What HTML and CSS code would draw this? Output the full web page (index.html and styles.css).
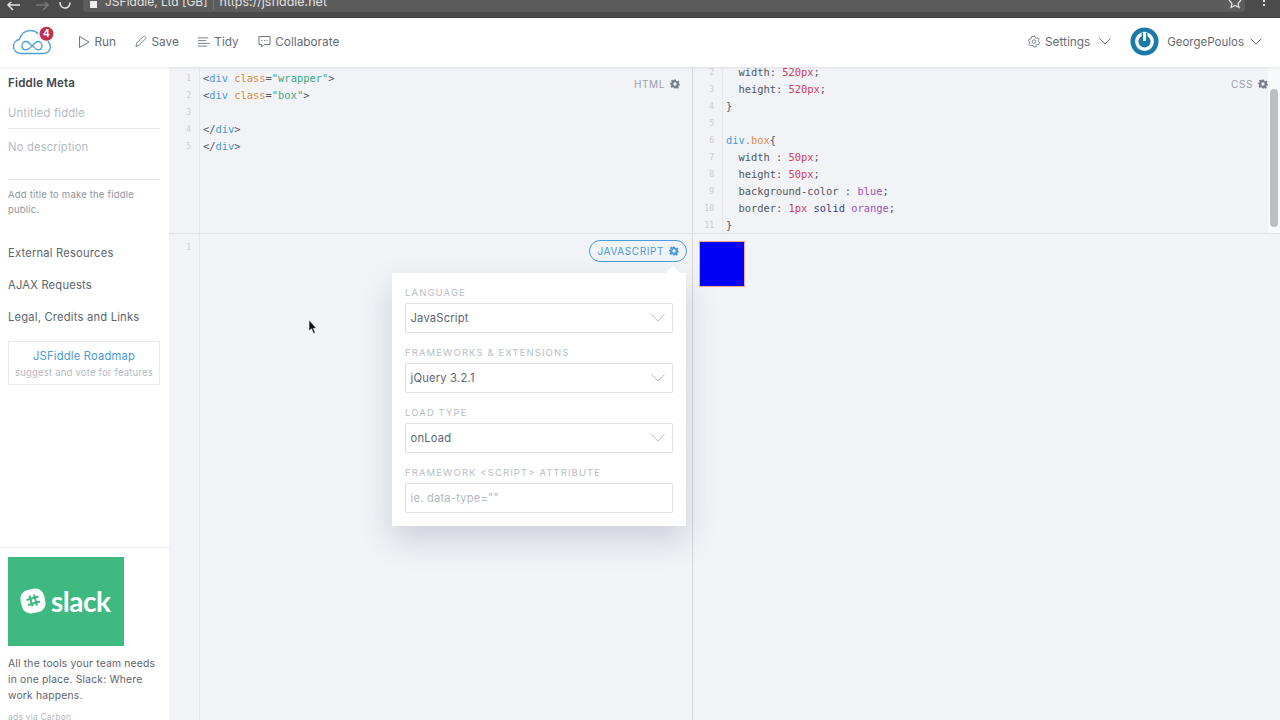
FILE: index.html
```html
<!DOCTYPE html>
<html lang="en">
<head>
<meta charset="UTF-8" />
<title>JSFiddle</title>
<link rel="stylesheet" href="styles.css">
</head>
<body>

<div class="browser-bar">
  <div class="browser-nav">
    <svg width="72" height="14" viewBox="0 0 72 14" fill="none" stroke="#e4e4e4" stroke-width="1.5">
      <path d="M20 3H9M13 -2L8 3L13 8"/>
      <path d="M36 3H47M43 -2L48 3L43 8" stroke="#7a7a7a"/>
      <path d="M70 0.5A5 5 0 1 1 68 -3"/>
    </svg>
  </div>
  <div class="address">
    <span class="lock"></span>
    <span class="site">JSFiddle, Ltd [GB]</span>
    <span class="url">https://jsfiddle.net</span>
  </div>
  <div class="browser-end">
    <svg width="14" height="12" viewBox="0 0 14 12" fill="none" stroke="#e4e4e4" stroke-width="1.2"><path d="M1 0L4 3.500L3 7.500L7 5.500L11 7.500L10 3.500L13 0"/></svg>
    <span class="dots"></span>
  </div>
</div>

<header class="topbar">
  <svg class="logo" width="50" height="34" viewBox="0 0 50 34" fill="none" stroke="#4c9ed9" stroke-width="1.300">
    <path d="M9 28.500C4 28.500 1.500 25 1.500 21.500C1.500 18 4 15 7.500 14.500C8.500 9 13 5.500 18.500 5.500C22 5.500 24.500 7 26 9"/>
    <path d="M36 16C37.500 18 38.500 20 38.500 22C38.500 26 35 28.500 31 28.500H9"/>
    <path d="M19.500 20.500C17.500 18 15.800 16.500 14 16.500C11.500 16.500 10 18.500 10 20.500C10 22.800 11.500 24.800 14 24.800C17 24.800 19 22 20.500 20.500C22 19 24 16.500 26 16.500C28.500 16.500 30 18.500 30 20.500C30 22.800 28.500 24.800 26 24.800C24 24.800 22.500 22.800 21 21.200"/>
    <circle cx="34.500" cy="8.800" r="7" fill="#c0314f" stroke="none"/>
    <text x="34.500" y="12.300" class="logo-count" stroke="none">4</text>
  </svg>
  <nav class="actions">
    <a class="action">
      <svg width="11" height="14" viewBox="0 0 11 14" fill="none" stroke="#6d7680" stroke-width="1"><path d="M.5 1.500L10 7L.5 12.500Z"/></svg>
      Run
    </a>
    <a class="action">
      <svg width="12" height="13" viewBox="0 0 13 13" fill="none" stroke="#6d7680" stroke-width="1"><path d="M1 12L2 8L8.500 1.500C9.200 .8 10.200 .8 11 1.500C11.800 2.300 11.800 3.300 11 4L4.500 10.500Z"/></svg>
      Save
    </a>
    <a class="action">
      <svg width="12" height="12" viewBox="0 0 13 12" fill="none" stroke="#6d7680" stroke-width="1"><path d="M0 1.500H11M0 4.500H9M0 7.500H12.500M0 10.500H10"/></svg>
      Tidy
    </a>
    <a class="action">
      <svg width="13" height="13" viewBox="0 0 13 13" fill="none" stroke="#6d7680" stroke-width="1"><path d="M1 1.500H12V9.500H6L3.500 12V9.500H1Z"/><path d="M3.500 5.500H4.500M6 5.500H7M8.500 5.500H9.500"/></svg>
      Collaborate
    </a>
  </nav>
  <div class="account">
    <a class="action settings">
      <svg width="12" height="13" viewBox="0 0 24 24" fill="none" stroke="#6d7680" stroke-width="1.800"><circle cx="12" cy="12" r="3.500"/><path d="M10 1.500H14L14.700 4.800L17.200 5.900L20 4L22.500 7.500L20.200 9.800L20.800 12.500L23 14L21.500 18L18.500 17.500L16.500 19.500L16.500 22.500L12 23L10.500 20.300L7.500 19.500L5 21L2 18L3.800 15.300L3 12.500L.8 11L2 7L5 7L6.800 5L7 2.500Z"/></svg>
      Settings
      <svg class="chevron" width="12" height="7" viewBox="0 0 12 7" fill="none" stroke="#6d7680"><path d="M.5 .5L6 6L11.500 .5"/></svg>
    </a>
    <a class="user">
      <svg width="29" height="29" viewBox="0 0 30 30" fill="none">
        <circle cx="15" cy="15" r="14.500" fill="#1a7ba8"/>
        <circle cx="15" cy="15" r="8" stroke="#fff" stroke-width="3.500"/>
        <path d="M15 6V15" stroke="#1a7ba8" stroke-width="6"/>
        <path d="M15 5V14.500" stroke="#fff" stroke-width="3"/>
      </svg>
      GeorgePoulos
      <svg class="chevron" width="12" height="7" viewBox="0 0 12 7" fill="none" stroke="#6d7680"><path d="M.5 .5L6 6L11.500 .5"/></svg>
    </a>
  </div>
</header>

<div class="main">
  <aside class="sidebar">
    <div class="meta">
      <h4>Fiddle Meta</h4>
      <div class="field title-field">Untitled fiddle</div>
      <div class="field desc-field">No description</div>
      <p class="hint">Add title to make the fiddle public.</p>
    </div>
    <ul class="side-links">
      <li>External Resources</li>
      <li>AJAX Requests</li>
      <li>Legal, Credits and Links</li>
    </ul>
    <div class="roadmap">
      <a>JSFiddle Roadmap</a>
      <span>suggest and vote for features</span>
    </div>
    <div class="ad">
      <div class="ad-image">
        <svg width="26" height="26" viewBox="0 0 26 26">
          <rect x="1" y="1" width="24" height="24" rx="9" fill="#fff" transform="rotate(-12 13 13)"/>
          <path d="M9.500 7.500L12.500 18.500M14 6.500L17 17.500M6.500 12L18.500 8.500M8 17L20 13.500" stroke="#3eb97f" stroke-width="2" fill="none"/>
        </svg>
        <span>slack</span>
      </div>
      <p>All the tools your team needs in one place. Slack: Where work happens.</p>
      <small>ads via Carbon</small>
    </div>
  </aside>

  <section class="workspace">
    <div class="col col-left">
      <div class="pane pane-html">
        <div class="code">
          <div class="line"><i>1</i><code><b class="p">&lt;</b><b class="tag">div</b> <b class="attr">class</b><b class="p">=</b><b class="str">"wrapper"</b><b class="p">&gt;</b></code></div>
          <div class="line"><i>2</i><code><b class="p">&lt;</b><b class="tag">div</b> <b class="attr">class</b><b class="p">=</b><b class="str">"box"</b><b class="p">&gt;</b></code></div>
          <div class="line"><i>3</i><code></code></div>
          <div class="line"><i>4</i><code><b class="p">&lt;/</b><b class="tag">div</b><b class="p">&gt;</b></code></div>
          <div class="line"><i>5</i><code><b class="p">&lt;/</b><b class="tag">div</b><b class="p">&gt;</b></code></div>
        </div>
        <div class="pane-label">HTML <svg class="gear"><use href="#gear"/></svg></div>
      </div>
      <div class="pane pane-js">
        <div class="code">
          <div class="line"><i>1</i><code></code></div>
        </div>
        <div class="pane-label active">JAVASCRIPT <svg class="gear"><use href="#gear"/></svg></div>
        <div class="popover">
          <label>LANGUAGE</label>
          <div class="select">JavaScript <svg class="chevron" width="14" height="8" viewBox="0 0 14 8" fill="none" stroke="#b9bec4"><path d="M.5 .5L7 7L13.500 .5"/></svg></div>
          <label>FRAMEWORKS &amp; EXTENSIONS</label>
          <div class="select">jQuery 3.2.1 <svg class="chevron" width="14" height="8" viewBox="0 0 14 8" fill="none" stroke="#b9bec4"><path d="M.5 .5L7 7L13.500 .5"/></svg></div>
          <label>LOAD TYPE</label>
          <div class="select">onLoad <svg class="chevron" width="14" height="8" viewBox="0 0 14 8" fill="none" stroke="#b9bec4"><path d="M.5 .5L7 7L13.500 .5"/></svg></div>
          <label>FRAMEWORK &lt;SCRIPT&gt; ATTRIBUTE</label>
          <div class="select placeholder">ie. data-type=""</div>
        </div>
      </div>
    </div>
    <div class="col col-right">
      <div class="pane pane-css">
        <div class="code scrolled">
          <div class="line"><i>2</i><code>  width: <b class="num">520px</b>;</code></div>
          <div class="line"><i>3</i><code>  height: <b class="num">520px</b>;</code></div>
          <div class="line"><i>4</i><code>}</code></div>
          <div class="line"><i>5</i><code></code></div>
          <div class="line"><i>6</i><code><b class="tag">div</b><b class="attr">.box</b>{</code></div>
          <div class="line"><i>7</i><code>  width : <b class="num">50px</b>;</code></div>
          <div class="line"><i>8</i><code>  height: <b class="num">50px</b>;</code></div>
          <div class="line"><i>9</i><code>  background-color : <b class="kw">blue</b>;</code></div>
          <div class="line"><i>10</i><code>  border: <b class="num">1px</b> <b class="solid">solid</b> <b class="kw">orange</b>;</code></div>
          <div class="line"><i>11</i><code>}</code></div>
        </div>
        <div class="pane-label">CSS <svg class="gear"><use href="#gear"/></svg></div>
        <div class="scroll-track"><div class="scroll-thumb"></div></div>
      </div>
      <div class="result">
        <div class="box"></div>
      </div>
    </div>
  </section>
</div>

<svg class="cursor" width="10" height="15" viewBox="0 0 10 15"><path d="M1 0V11L3.500 8.800L5.500 13.500L7.300 12.700L5.300 8.300H8.500Z" fill="#111" stroke="#fff" stroke-width=".6"/></svg>

<svg width="0" height="0" class="defs">
  <symbol id="gear" viewBox="0 0 24 24">
    <path fill-rule="evenodd" d="M10 1H14L14.800 4.200L17.300 5.200L20 3.500L22.800 6.500L21 9.200L21.800 11.500L24 12.500V15L21 15.800L19.900 18.200L21.500 21L18.500 23.500L16 21.800L13.500 23H10.500L9.800 20.500L7 19.500L4 21.300L1.200 18L3 15.500L2.300 13L0 12V9.500L3 8.700L4 6L2.500 3.500L5.500 1L8 2.800L9.500 2.200ZM12 8A4 4 0 1 0 12 16A4 4 0 1 0 12 8Z"/>
  </symbol>
</svg>

</body>
</html>
```

FILE: styles.css
```css
* {
  box-sizing: border-box;
}
html, body {
  margin: 0;
  height: 720px;
  overflow: hidden;
}
body {
  font-family: Inter, "Noto Sans", sans-serif;
  background: #f1f3f7;
  color: #5c646c;
  position: relative;
}
.defs {
  position: absolute;
}

/* browser chrome */
.browser-bar {
  height: 18px;
  background: #4b4b4b;
  border-bottom: 1px solid #3f3f3f;
  display: flex;
  overflow: hidden;
}
.browser-nav {
  width: 83px;
  height: 14px;
}
.address {
  width: 1162px;
  height: 12px;
  background: #5c5c5c;
  border-radius: 0 0 4px 4px;
  display: flex;
  align-items: flex-end;
  color: #e2e2e2;
  font-size: 12.500px;
  line-height: 14px;
  padding-left: 7px;
  padding-bottom: 3px;
  overflow: hidden;
}
.lock {
  width: 7px;
  height: 7px;
  background: #eee;
  margin-right: 8px;
  margin-bottom: 1px;
  flex-shrink: 0;
}
.site {
  font-size: 12px;
  padding-right: 5px;
  border-right: 1px solid #777;
  margin-right: 6px;
}
.browser-end {
  display: flex;
  gap: 21px;
  margin-left: -17px;
}
.dots {
  width: 2px;
  height: 2px;
  background: #e4e4e4;
  margin-top: 4px;
  box-shadow: 0 -4px 0 #e4e4e4;
}

/* top bar */
.topbar {
  height: 49px;
  background: #fff;
  display: flex;
  align-items: center;
  padding-left: 12px;
  padding-bottom: 2px;
  position: relative;
  z-index: 2;
  box-shadow: 0 1px 3px rgba(0, 0, 0, 0.08);
}
.logo-count {
  font-size: 10px;
  font-weight: 700;
  fill: #fff;
  text-anchor: middle;
}
.actions {
  display: flex;
  gap: 19px;
  margin-left: 17px;
}
.action {
  display: flex;
  align-items: center;
  gap: 4.500px;
  font-size: 11.800px;
  color: #636c75;
}
.account {
  margin-left: auto;
  display: flex;
  align-items: center;
  padding-right: 18px;
}
.settings {
  gap: 5px;
}
.settings .chevron {
  margin-left: 4px;
}
.user {
  display: flex;
  align-items: center;
  gap: 8px;
  font-size: 11.500px;
  color: #636c75;
  margin-left: 19px;
}
.user .chevron {
  margin-left: -2px;
}

.main {
  display: flex;
  height: 653px;
}

/* sidebar */
.sidebar {
  width: 169px;
  flex-shrink: 0;
  background: #fff;
  padding: 0 9px 0 8px;
  display: flex;
  flex-direction: column;
  font-size: 11.200px;
  letter-spacing: 0.2px;
}
.meta h4 {
  margin: 0;
  padding-top: 9px;
  font-size: 11.500px;
  line-height: 14px;
  font-weight: 600;
  color: #41474e;
}
.field {
  color: #b4b9c0;
  border-bottom: 1px solid #e6e8ec;
  font-size: 11.200px;
}
.title-field {
  height: 39px;
  padding-top: 15px;
  line-height: 16px;
}
.desc-field {
  height: 51px;
  padding-top: 10px;
  line-height: 16px;
}
.hint {
  margin: 7px 0 0;
  font-size: 9.500px;
  line-height: 15px;
  color: #8e959d;
}
.side-links {
  list-style: none;
  margin: 28px 0 0;
  padding: 0;
}
.side-links li {
  height: 32px;
  line-height: 16px;
  color: #5c646c;
}
.roadmap {
  height: 44px;
  border: 1px solid #e8eaee;
  display: flex;
  flex-direction: column;
  align-items: center;
  padding-top: 7px;
}
.roadmap a {
  color: #4a9bd8;
  font-size: 11.200px;
  line-height: 15px;
}
.roadmap span {
  color: #b4b9c0;
  font-size: 9.500px;
  line-height: 17px;
  white-space: nowrap;
}
.ad {
  margin: auto -9px 0 -8px;
  border-top: 1px solid #eceef1;
  padding: 9px 8px 0;
  height: 173px;
  overflow: hidden;
}
.ad-image {
  width: 116px;
  height: 89px;
  background: #3eb97f;
  color: #fff;
  display: flex;
  align-items: center;
  padding-left: 12px;
  padding-bottom: 2px;
  gap: 5px;
}
.ad-image span {
  font-family: Lato, sans-serif;
  font-weight: 700;
  font-size: 28px;
  letter-spacing: -0.5px;
  line-height: 28px;
}
.ad p {
  margin: 9px 0 0;
  font-size: 10.300px;
  line-height: 16px;
  color: #5c646c;
}
.ad small {
  display: block;
  font-size: 8.500px;
  color: #b4b9c0;
  margin-top: 9px;
}

/* editors */
.workspace {
  flex: 1;
  display: flex;
}
.col {
  display: flex;
  flex-direction: column;
}
.col-left {
  width: 524px;
  border-right: 1px solid #d5d8dd;
}
.col-right {
  flex: 1;
}
.pane {
  position: relative;
}
.pane-html, .pane-css {
  height: 167px;
  border-bottom: 1px solid #dde0e5;
  overflow: hidden;
}
.pane-js {
  flex: 1;
}
.code {
  padding-top: 3px;
  height: 100%;
  font-family: "DejaVu Sans Mono", monospace;
  font-size: 10.400px;
  line-height: 17px;
  color: #50575e;
}
.code.scrolled {
  padding-top: 0;
  margin-top: -3px;
}
.pane-js .code {
  padding-top: 5px;
}
.line {
  display: flex;
  height: 17px;
}
.line i {
  width: 31px;
  flex-shrink: 0;
  font-style: normal;
  font-size: 8px;
  color: #c9ccd2;
  text-align: right;
  padding-right: 8px;
  border-right: 1px solid #e4e6ea;
  margin-right: 3px;
}
.col-right .line i {
  width: 30px;
}
.code code {
  font: inherit;
  white-space: pre;
}
.code b {
  font-weight: 400;
}
.tag { color: #4a9bd8; }
.attr { color: #d88d3f; }
.str { color: #3fa97e; }
.num { color: #d0405c; }
.kw { color: #9a56b8; }
.solid { color: #3a3a8c; }

/* gutter runs the full pane height */
.pane-html::before,
.pane-css::before,
.pane-js::before {
  content: "";
  position: absolute;
  top: 0;
  bottom: 0;
  left: 30px;
  border-left: 1px solid #e4e6ea;
}
.pane-css::before {
  left: 29px;
}

.pane-label {
  position: absolute;
  top: 10px;
  right: 12px;
  display: flex;
  align-items: center;
  gap: 5px;
  font-size: 10px;
  line-height: 14px;
  letter-spacing: 0.6px;
  color: #98a0a8;
}
.gear {
  width: 10px;
  height: 10px;
  fill: #76808a;
}
.pane-label.active {
  top: 6px;
  right: 5px;
  height: 22px;
  padding: 0 7px;
  border: 1px solid #4a9bd8;
  border-radius: 11px;
  color: #4a9bd8;
}
.pane-label.active .gear {
  fill: #4a9bd8;
}

.scroll-track {
  position: absolute;
  top: 0;
  right: 0;
  bottom: 0;
  width: 12px;
  padding: 22px 2px 0;
  background: #f8f9fb;
}
.scroll-thumb {
  height: 138px;
  border-radius: 4px;
  background: #bcbec0;
}

/* language popover */
.popover {
  position: absolute;
  top: 39px;
  left: 223px;
  width: 294px;
  height: 253px;
  background: #fff;
  padding: 13px;
  box-shadow: 0 14px 30px rgba(60, 70, 90, 0.2);
}
.popover::before {
  content: "";
  position: absolute;
  top: -7px;
  right: 6px;
  width: 14px;
  height: 14px;
  background: #fff;
  transform: rotate(45deg) scale(0.72);
}
.popover label {
  display: block;
  font-size: 9.500px;
  line-height: 14.500px;
  letter-spacing: 1.100px;
  color: #b8bdc3;
  height: 17px;
}
.select {
  height: 30px;
  border: 1px solid #dfe1e5;
  border-radius: 1px;
  margin-bottom: 13px;
  padding: 0 7px 0 4.500px;
  display: flex;
  align-items: center;
  justify-content: space-between;
  font-size: 11.200px;
  letter-spacing: 0.2px;
  color: #5c646c;
}
.select.placeholder {
  color: #b4b9c0;
}

/* result */
.result {
  padding: 7px 6px;
  flex: 1;
}
.box {
  width: 46px;
  height: 46px;
  background: #0000f5;
  border: 1px solid #f0a890;
}

.cursor {
  position: absolute;
  left: 308px;
  top: 320px;
  z-index: 5;
}
```
